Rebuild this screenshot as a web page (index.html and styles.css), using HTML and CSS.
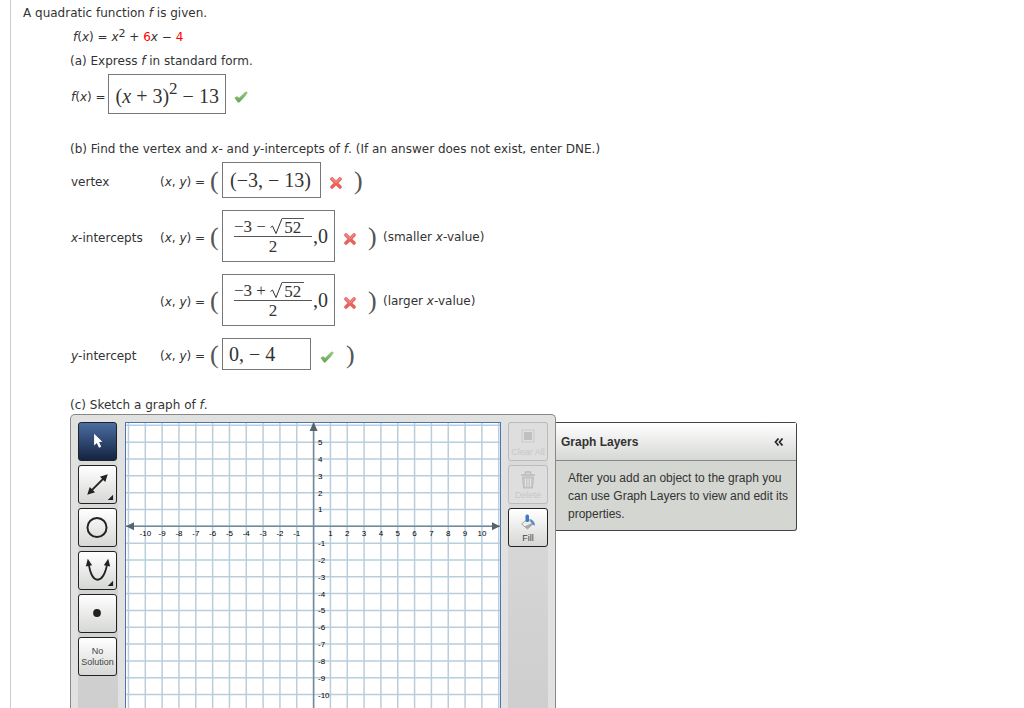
FILE: index.html
```html
<!DOCTYPE html>
<html lang="en">
<head>
<meta charset="utf-8">
<title>Quadratic function</title>
<link rel="stylesheet" href="styles.css">
</head>
<body>
<svg class="defs" width="0" height="0" aria-hidden="true">
  <defs>
    <linearGradient id="gGreen" x1="0" y1="0" x2="0" y2="1"><stop offset="0" stop-color="#9acb86"/><stop offset="1" stop-color="#62a652"/></linearGradient>
    <symbol id="check" viewBox="0 0 14 12"><path d="M0.5 7 Q1.500 5 3.500 5.500 L5.200 6.800 L11 1 Q13 0 13.600 1.600 Q13.500 3.500 5.800 11 Q4.600 12 3.600 11 Z" fill="url(#gGreen)"/></symbol>
    <symbol id="cross" viewBox="0 0 12 12"><path d="M2 2 L10 10 M10 2 L2 10" stroke="#e9635e" stroke-width="3.600" stroke-linecap="round"/><path d="M2 1.600 L6 5.400 L10 1.600" fill="none" stroke="#f2857f" stroke-width="1.600" stroke-linecap="round"/></symbol>
  </defs>
</svg>
<main class="question">
  <p class="line">A quadratic function <i>f</i> is given.</p>
  <p class="line line-formula"><i>f</i>(<i>x</i>) = <i>x</i><sup>2</sup> + <span class="num">6</span><i>x</i> − <span class="num">4</span></p>
  <section class="parts">
    <p class="line">(a) Express <i>f</i> in standard form.</p>
    <div class="answer-a">
      <span class="lead" id="la"><i>f</i>(<i>x</i>) =</span>
      <div class="field field-a" role="textbox" contenteditable="true" spellcheck="false" aria-labelledby="la">(<i>x</i> + 3)<sup>2</sup> − 13</div>
      <svg class="check"><use href="#check"/></svg>
    </div>

    <p class="line line-b">(b) Find the vertex and <i>x</i>- and <i>y</i>-intercepts of <i>f</i>. (If an answer does not exist, enter DNE.)</p>
    <div class="answers">
      <div class="row">
        <label class="name" for="vertex">vertex</label>
        <span class="pair">(<i>x</i>, <i>y</i>) =</span><span class="paren">(</span>
        <input class="field vertex" id="vertex" type="text" spellcheck="false" value="(−3, − 13)">
        <svg class="cross"><use href="#cross"/></svg><span class="paren close">)</span>
      </div>
      <div class="row">
        <span class="name" id="lx"><i>x</i>-intercepts</span>
        <span class="pair">(<i>x</i>, <i>y</i>) =</span><span class="paren">(</span>
        <div class="field frac-field" role="textbox" contenteditable="true" spellcheck="false" aria-labelledby="lx">
          <span class="frac"><span class="top">−3 − <svg class="radical" viewBox="0 0 12 17"><path d="M0.500 9.500 L2.500 8 L6 15.500 L12 0.500"/></svg><span class="root">52</span></span><span class="bottom">2</span></span><span>,0</span>
        </div>
        <svg class="cross"><use href="#cross"/></svg><span class="paren close">)</span>
        <span class="note">(smaller <i>x</i>-value)</span>
      </div>
      <div class="row">
        <span class="name"></span>
        <span class="pair" id="lx2">(<i>x</i>, <i>y</i>) =</span><span class="paren">(</span>
        <div class="field frac-field" role="textbox" contenteditable="true" spellcheck="false" aria-labelledby="lx2">
          <span class="frac"><span class="top">−3 + <svg class="radical" viewBox="0 0 12 17"><path d="M0.500 9.500 L2.500 8 L6 15.500 L12 0.500"/></svg><span class="root">52</span></span><span class="bottom">2</span></span><span>,0</span>
        </div>
        <svg class="cross"><use href="#cross"/></svg><span class="paren close">)</span>
        <span class="note">(larger <i>x</i>-value)</span>
      </div>
      <div class="row">
        <label class="name" for="yint"><i>y</i>-intercept</label>
        <span class="pair">(<i>x</i>, <i>y</i>) =</span><span class="paren">(</span>
        <input class="field yint" id="yint" type="text" spellcheck="false" value="0, − 4">
        <svg class="check"><use href="#check"/></svg><span class="paren close">)</span>
      </div>
    </div>
    <p class="line line-c">(c) Sketch a graph of <i>f</i>.</p>
  </section>

  <section class="grapher">
    <div class="board">
      <div class="tools">
        <button class="tool active" aria-label="Select"><svg viewBox="0 0 38 38"><path d="M15.500 11 V23 L18.300 20.500 L20.500 25.500 L22.800 24.500 L20.600 19.600 L24 19.200 Z" fill="#fff"/></svg></button>
        <button class="tool" aria-label="Line"><svg viewBox="0 0 38 38"><path d="M13 25 L25 13" stroke="#222" stroke-width="2"/><path d="M8.500 29.500 L11 21.500 L16.500 27 Z M29.500 8.500 L21.500 11 L27 16.500 Z M35 29.500 V35 H29.500 Z" fill="#222"/></svg></button>
        <button class="tool" aria-label="Circle"><svg viewBox="0 0 38 38"><circle cx="18.500" cy="19" r="9.800" fill="none" stroke="#222" stroke-width="2"/></svg></button>
        <button class="tool" aria-label="Parabola"><svg viewBox="0 0 38 38"><path d="M10 12 C13 34 25 34 29 12" fill="none" stroke="#222" stroke-width="1.800"/><path d="M9 7 L7 15 L13.500 13.500 Z M30 7 L25.500 13.500 L32 15 Z M35 29.500 V35 H29.500 Z" fill="#222"/></svg></button>
        <button class="tool" aria-label="Point"><svg viewBox="0 0 38 38"><circle cx="18.500" cy="18.500" r="4" fill="#222"/></svg></button>
        <button class="tool words">No<br>Solution</button>
      </div>
      <svg class="canvas" id="canvas" viewBox="0 0 376 376" role="img" aria-label="Coordinate grid"></svg>
      <div class="tools">
        <button class="tool captioned" disabled><svg viewBox="0 0 16 16"><rect x="2" y="2" width="12" height="12" fill="none" stroke="#cacaca"/><rect x="4" y="4" width="8" height="8" fill="#c0c0c0"/></svg>Clear All</button>
        <button class="tool captioned" disabled><svg class="bin" viewBox="0 0 16 18"><path d="M1 4 H15 M5.500 3.500 V1 H10.500 V3.500" fill="none" stroke="#bbb" stroke-width="1.500"/><path d="M2.500 6 H13.500 L12.500 17 H3.500 Z" fill="#c8c8c8" stroke="#bbb"/><path d="M5.500 7.500 V15.500 M8 7.500 V15.500 M10.500 7.500 V15.500" stroke="#e4e4e4"/></svg>Delete</button>
        <button class="tool captioned"><svg viewBox="0 0 16 16"><path d="M1.500 10 L7.500 5 L13 10 L7.500 15 Z" fill="#ececec" stroke="#aaa"/><path d="M4.500 12.500 L12 9 L13 10 L7.500 15 Z" fill="#a8a8a8"/><path d="M9 5 Q14.500 5.500 15 11.500 Q12.500 11.500 11.800 9 Z" fill="#5b8cc8"/><rect x="5.500" y="0.500" width="3.500" height="7.500" rx="1.500" fill="#4377c2"/></svg>Fill</button>
      </div>
    </div>
    <aside class="layers">
      <header class="layers-head"><h2>Graph Layers</h2><button class="collapse" aria-label="Collapse"><svg viewBox="0 0 10 8"><path d="M4.500 0.500 L1.500 4 L4.500 7.500 M8.500 0.500 L5.500 4 L8.500 7.500" fill="none" stroke="#222" stroke-width="1.700"/></svg></button></header>
      <p>After you add an object to the graph you can use Graph Layers to view and edit its properties.</p>
    </aside>
  </section>
</main>
<script src="graph.js"></script>
</body>
</html>
```
FILE: styles.css
```css
* { box-sizing: border-box; }
body { margin: 0; background: #fff; color: #333; font: 12px/24px "DejaVu Sans", Verdana, sans-serif; }
.defs { position: absolute; }
.question { display: flex; flex-direction: column; height: 100vh; overflow: hidden; margin-left: 10px; border-left: 1px solid #ccc; padding: 1px 0 0 12px; }
p { margin: 0; }
sup { line-height: 0; font-size: 11px; vertical-align: 4px; }
.line { flex: none; }
.line-formula { padding-left: 50px; }
.num { color: #f00; }
.parts { padding-left: 47px; flex: none; }
.answer-a { display: flex; align-items: center; margin-top: 1px; }
.lead { padding: 5px 2px 0 1px; }
.field { flex: none; border: 1px solid #777; background: #fff; color: #333; font: 20px/36px "Liberation Serif", "Times New Roman", serif; padding: 0 7px; margin: 0; border-radius: 0; white-space: nowrap; outline: 0; }
.field-a { height: 40px; line-height: 42px; width: 118px; }
.field-a sup { font-size: 17px; vertical-align: 9px; }
.check { flex: none; width: 14px; height: 12px; margin: 6px 0 0 8px; }
.cross { flex: none; width: 12px; height: 12px; margin: 6px 0 0 9px; }
.line-b { margin-top: 23px; }
.answers { display: flex; flex-direction: column; gap: 12px; margin-top: 1px; }
.row { display: flex; align-items: center; }
.name { width: 90px; padding: 4px 0 0 1px; }
.pair { width: 50px; padding-top: 4px; white-space: nowrap; }
.paren { width: 12px; padding-top: 2px; font: 26px/30px "Liberation Serif", serif; color: #555; }
.close { margin-left: 12px; width: 15px; }
.row .check { margin-left: 9px; }
.vertex { width: 99px; height: 36px; }
.yint { width: 89px; height: 32px; padding: 0 6px; }
.frac-field { width: 113px; height: 52px; display: flex; align-items: center; padding: 0 6px 0 11px; }
.frac { display: flex; flex-direction: column; width: 80px; font-size: 17px; line-height: 19px; text-align: center; margin-right: 1px; }
.top { display: flex; align-items: flex-end; white-space: pre; border-bottom: 1px solid #555; height: 21px; }
.radical { width: 12px; height: 17px; margin-bottom: 1px; }
.radical path { fill: none; stroke: #333; stroke-width: 1; }
.root { border-top: 1px solid #555; padding: 0 3px 0 2px; line-height: 17px; }
.bottom { line-height: 20px; }
.note { padding-top: 1px; }
.line-c { line-height: 18px; margin-top: 26px; }

.grapher { display: flex; flex: 1; align-items: flex-start; min-height: 0; padding-left: 47px; }
.board { display: flex; gap: 7px; flex: none; align-self: stretch; background: #e1e1df; border: 1px solid #888; border-bottom: 0; border-radius: 5px 5px 0 0; padding: 7px 7px 0; min-height: 0; overflow: hidden; }
.tools { display: flex; flex-direction: column; gap: 4px; width: 40px; background: linear-gradient(#dcdcdc, #cecece); }
.tool { flex: none; width: 39px; height: 39px; border: 1px solid #222; border-radius: 3px; padding: 0; background: linear-gradient(#fff, #d6d8d5); color: #444; font: 9px/11px "Liberation Sans", Arial, sans-serif; display: block; }
.tool > svg { display: block; width: 100%; height: 100%; }
.active { background: linear-gradient(#4a6da3, #14233f); }
.tool:disabled { background: #dedede; border-color: #bbb; color: #c8c8c8; }
.captioned { width: 40px; }
.captioned > svg { width: 16px; height: 16px; margin: 2px auto 3px; }
.captioned > .bin { height: 18px; margin: 2px auto 1px; }
.canvas { width: 376px; height: 376px; flex: none; background: #fff; }
.canvas text { font: 8px "Liberation Sans", Arial, sans-serif; fill: #000; }
.layers { width: 241px; margin-top: 8px; border: 1px solid #444; border-left: 0; border-radius: 0 3px 3px 0; background: #d4d6d1; font: 12px/18px "Liberation Sans", Arial, sans-serif; color: #333; }
.layers-head { display: flex; align-items: center; justify-content: space-between; height: 38px; padding: 0 12px 0 5px; background: linear-gradient(#fff, #d6d8d5); border-bottom: 1px solid #888; }
.layers h2 { margin: 0; font-size: 12px; }
.layers p { padding: 8px 2px 7px 12px; }
.collapse { border: 0; padding: 0; background: none; width: 10px; height: 8px; }
.collapse svg { display: block; width: 10px; height: 8px; }
```
FILE: graph.js
```js
const svg = document.getElementById('canvas');
const unit = 16.83;
const origin = { x: 188.6, y: 104.3 };
const px = v => origin.x + v * unit;
const py = v => origin.y - v * unit;
const add = (tag, attrs, text) => {
  const node = document.createElementNS('http://www.w3.org/2000/svg', tag);
  for (const key in attrs) node.setAttribute(key, attrs[key]);
  if (text !== undefined) node.textContent = text;
  svg.appendChild(node);
};

for (let v = -11; v <= 11; v++) {
  add('line', { x1: px(v), x2: px(v), y1: 0, y2: 376, stroke: '#b9cedc', 'stroke-width': 1.5 });
}
for (let v = -16; v <= 6; v++) {
  add('line', { x1: 0, x2: 376, y1: py(v), y2: py(v), stroke: '#b9cedc', 'stroke-width': 1.5 });
}
add('rect', { x: 0.5, y: 0.5, width: 375, height: 375, fill: 'none', stroke: '#4a74b4' });
add('path', { d: `M0 ${py(0)} H376 M${px(0)} 0 V376`, stroke: '#74899a', 'stroke-width': 1.5 });
add('path', {
  d: `M${px(0)} 0 l4 9 h-8 Z M1 ${py(0)} l8 -4 v8 Z M375 ${py(0)} l-8 -4 v8 Z`,
  fill: '#56646c'
});

for (let v = -10; v <= 10; v++) {
  if (v === 0) continue;
  add('text', { x: px(v), y: 114, 'text-anchor': 'middle' }, v);
  if (v <= 5) add('text', { x: 193, y: py(v) + 3 }, v);
}
```
